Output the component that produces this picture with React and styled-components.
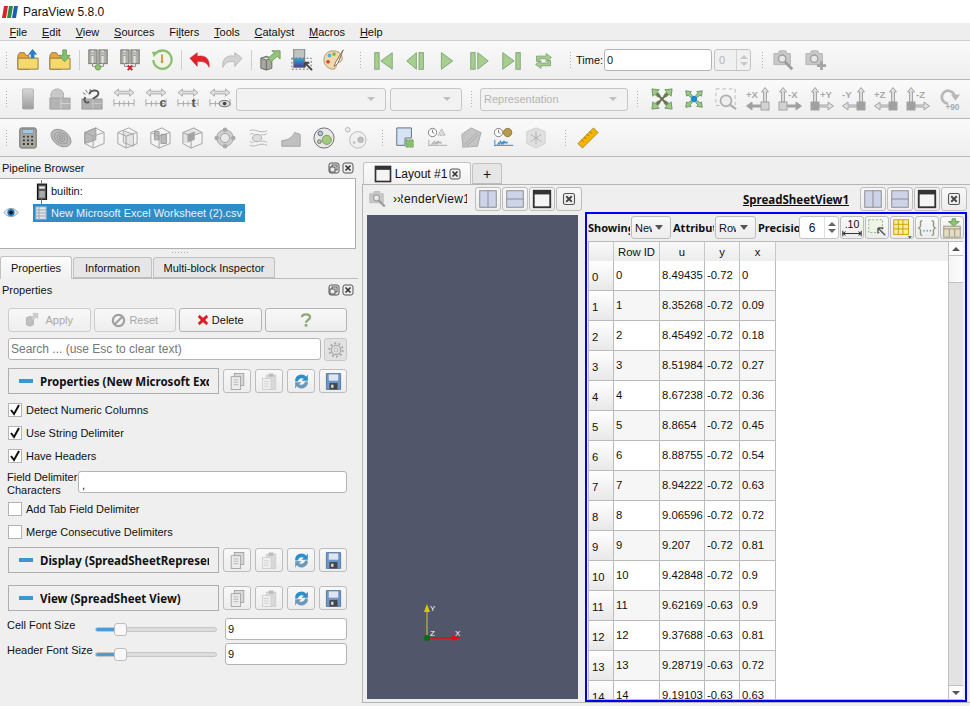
import React from "react";
import styled, { createGlobalStyle } from "styled-components";

const Global = createGlobalStyle`
  html, body { margin: 0; padding: 0; background: #efefef; }
  body { font-family: "Liberation Sans", Arial, sans-serif; font-size: 11px; color: #111; }
  * { box-sizing: border-box; }
`;

const Page = styled.div`
  width: 970px;
  height: 706px;
  overflow: hidden;
  display: flex;
  flex-direction: column;
  background: #efefef;
`;

const TitleBar = styled.div`
  height: 23px;
  background: #fff;
  display: flex;
  align-items: center;
  padding-left: 2px;
  gap: 5px;
  font-size: 12px;
`;

const MenuBar = styled.div`
  height: 18px;
  display: flex;
  align-items: center;
  padding-left: 2px;
  background: #eee;
  border-bottom: 1px solid #cfcfcf;
`;

const MenuItem = styled.span`
  padding: 0 7.4px;
  u { text-underline-offset: 1px; }
`;

const ToolRow = styled.div`
  height: ${p => p.$h || 39}px;
  display: flex;
  align-items: center;
  background: linear-gradient(#fafafa, #eeeeee);
  border-bottom: 1px solid #b8b8b8;
`;

const HandleBox = styled.div`
  width: ${p => p.$w || 12}px;
  flex: none;
  display: flex;
  justify-content: center;
  padding-left: ${p => p.$pad || 0}px;
  &::before {
    content: "";
    width: 3px;
    height: 18px;
    background-image: radial-gradient(#b0b0b0 0.7px, transparent 0.9px);
    background-size: 3px 3px;
  }
`;

const Sep = styled.div`
  width: 6px;
  flex: none;
  display: flex;
  justify-content: center;
  &::before { content: ""; width: 1px; height: 20px; background: #cfcfcf; }
`;

const ToolCell = styled.div`
  width: ${p => p.$w || 32}px;
  flex: none;
  display: flex;
  align-items: center;
  justify-content: center;
`;

const Glyph = styled.svg`
  width: ${p => p.$s || 24}px;
  height: ${p => p.$s || 24}px;
  flex: none;
  display: block;
`;

const Combo = styled.div`
  width: ${p => p.$w}px;
  height: 23px;
  flex: none;
  margin-left: ${p => p.$ml || 0}px;
  display: flex;
  align-items: center;
  padding: 0 3px;
  border: 1px solid #c6c6c6;
  border-radius: 3px;
  background: #f2f2f2;
  color: #b4b4b4;
  overflow: hidden;
  white-space: nowrap;
  &::after {
    content: "";
    margin-left: auto;
    margin-right: 7px;
    border: 4px solid transparent;
    border-top: 4px solid #c0c0c0;
    border-bottom: 0;
  }
`;

const TimeLabel = styled.span`
  width: 28px;
  flex: none;
`;

const TextBox = styled.div`
  width: ${p => (p.$w ? p.$w + "px" : "auto")};
  flex: ${p => (p.$w ? "none" : 1)};
  height: ${p => p.$h || 22}px;
  background: #fff;
  border: 1px solid #b4b4b4;
  border-radius: 3px;
  padding: 0 2px;
  display: flex;
  align-items: center;
  font-size: ${p => (p.$muted ? 12 : 11)}px;
  color: ${p => (p.$muted ? "#777" : "#111")};
  white-space: nowrap;
  overflow: hidden;
`;

const Spin = styled.div`
  width: ${p => p.$w}px;
  height: 22px;
  flex: none;
  margin-left: 2px;
  border: 1px solid #c4c4c4;
  border-radius: 3px;
  background: ${p => (p.$on ? "#fff" : "#f0f0f0")};
  color: ${p => (p.$on ? "#111" : "#b4b4b4")};
  display: flex;
  align-items: center;
  justify-content: space-between;
  padding-left: ${p => (p.$on ? 0 : 4)}px;
`;

const SpinValue = styled.span`
  flex: 1;
  text-align: ${p => (p.$center ? "center" : "left")};
`;

const SpinArrows = styled.div`
  width: 14px;
  height: 100%;
  flex: none;
  border-left: 1px solid ${p => (p.$on ? "#e0e0e0" : "#d0d0d0")};
  display: flex;
  flex-direction: column;
  align-items: center;
  justify-content: center;
  gap: 3px;
  &::before, &::after { content: ""; border: 4px solid transparent; }
  &::before { border-bottom: 4px solid ${p => (p.$on ? "#666" : "#c8c8c8")}; border-top: 0; }
  &::after { border-top: 4px solid ${p => (p.$on ? "#666" : "#c8c8c8")}; border-bottom: 0; }
`;

const Main = styled.div`
  flex: 1;
  display: flex;
  min-height: 0;
`;

const LeftColumn = styled.div`
  width: 358px;
  flex: none;
  display: flex;
  flex-direction: column;
`;

const DockTitle = styled.div`
  height: 16px;
  margin-top: ${p => p.$mt || 0}px;
  display: flex;
  align-items: center;
  justify-content: space-between;
  padding: 0 4px 0 2px;
  white-space: nowrap;
`;

const DockButtons = styled.div`
  display: flex;
  gap: 2px;
`;

const TreeBox = styled.div`
  height: 71px;
  margin: 2px 2px 0 -1px;
  padding-top: 1px;
  background: #fff;
  border: 1px solid #adadad;
`;

const TreeRow = styled.div`
  position: relative;
  height: ${p => p.$h}px;
  margin-top: ${p => p.$mt || 0}px;
  display: flex;
  align-items: center;
`;

const TreeItem = styled.div`
  margin-left: 33px;
  width: ${p => (p.$selected ? "212px" : "auto")};
  height: 100%;
  display: flex;
  align-items: center;
  gap: ${p => (p.$selected ? 4 : 2)}px;
  padding-left: 2px;
  white-space: nowrap;
  background: ${p => (p.$selected ? "#308cc6" : "transparent")};
  color: ${p => (p.$selected ? "#e9f3fa" : "#111")};
`;

const EyeSlot = styled.div`
  position: absolute;
  left: 3px;
  top: 2px;
`;

const Stub = styled.div`
  position: absolute;
  left: 41px;
  top: ${p => p.$top}px;
  width: 1px;
  height: ${p => p.$h}px;
  background: #777;
`;

const Splitter = styled.div`
  height: 7px;
  display: flex;
  justify-content: center;
  align-items: center;
  &::before {
    content: "";
    width: 17px;
    height: 1px;
    background-image: radial-gradient(#aaa 0.6px, transparent 0.8px);
    background-size: 3px 1px;
  }
`;

const TabStrip = styled.div`
  height: 23px;
  display: flex;
  align-items: flex-end;
  border-bottom: 1px solid #bdbdbd;
  padding-left: ${p => p.$pad || 0}px;
`;

const Tab = styled.div`
  width: ${p => p.$w}px;
  height: ${p => (p.$active ? 23 : 21)}px;
  margin-bottom: ${p => (p.$active ? -1 : 0)}px;
  margin-right: 1px;
  display: flex;
  align-items: center;
  justify-content: center;
  gap: 2px;
  font-size: ${p => p.$fs || 11}px;
  background: ${p => (p.$active ? "linear-gradient(#fcfcfc, #f0f0f0)" : "#e6e6e6")};
  border: 1px solid #c2c2c2;
  border-bottom: ${p => (p.$active ? "none" : "1px solid #bdbdbd")};
  border-radius: 3px 3px 0 0;
  white-space: nowrap;
`;

const PropsBody = styled.div`
  padding: 0 11px 0 8px;
  display: flex;
  flex-direction: column;
`;

const ButtonRow = styled.div`
  display: flex;
  gap: 3px;
  margin-top: ${p => p.$mt || 0}px;
`;

const ActionButton = styled.div`
  flex: 1;
  height: 24px;
  display: flex;
  align-items: center;
  justify-content: center;
  gap: 3px;
  border: 1px solid ${p => (p.$off ? "#cdcdcd" : "#b4b4b4")};
  border-radius: 3px;
  background: linear-gradient(#f8f8f8, #eeeeee);
  color: ${p => (p.$off ? "#a8a8a8" : "#111")};
`;

const GearButton = styled.div`
  width: 23px;
  height: 23px;
  flex: none;
  display: flex;
  align-items: center;
  justify-content: center;
  border: 1px solid #c8c8c8;
  border-radius: 3px;
  background: #e2e2e2;
`;

const SectionRow = styled.div`
  display: flex;
  margin-top: ${p => p.$mt || 0}px;
  height: 26px;
`;

const SectionTitle = styled.div`
  width: 211px;
  flex: none;
  border: 1px solid #aeaeae;
  display: flex;
  align-items: center;
  padding: 0 9px 0 10px;
  &::before {
    content: "";
    width: 14px;
    height: 4px;
    flex: none;
    margin-right: 7px;
    background: #3d97cf;
  }
`;

const BoldClip = styled.span`
  flex: 1;
  min-width: 0;
  font-family: "Noto Sans", sans-serif;
  font-size: 11.5px;
  font-weight: 700;
  white-space: nowrap;
  overflow: hidden;
`;

const SectionTools = styled.div`
  display: flex;
  gap: 4px;
  margin-left: 4px;
  align-items: center;
`;

const SquareButton = styled.div`
  width: ${p => p.$w || 28}px;
  height: ${p => p.$h || 24}px;
  flex: none;
  display: flex;
  align-items: center;
  justify-content: center;
  border: 1px solid #bdbdbd;
  border-radius: 3px;
  background: linear-gradient(#f8f8f8, #ededed);
`;

const CheckRow = styled.div`
  height: 23px;
  display: flex;
  align-items: center;
  gap: 4px;
  margin-top: ${p => p.$mt || 0}px;
`;

const CheckBox = styled.div`
  width: 14px;
  height: 14px;
  flex: none;
  background: #fff;
  border: 1px solid #b4b4b4;
  display: flex;
  align-items: center;
  justify-content: center;
`;

const FieldRow = styled.div`
  display: flex;
  margin-top: ${p => p.$mt || 0}px;
  height: ${p => p.$h || 25}px;
`;

const FieldLabel = styled.div`
  width: 70px;
  flex: none;
  margin-left: -1px;
  margin-right: 1px;
  line-height: 13px;
  white-space: nowrap;
`;

const Comma = styled.span`
  padding: 5px 0 0 1px;
`;

const SliderRow = styled.div`
  display: flex;
  align-items: center;
  height: 22px;
  margin-top: ${p => p.$mt || 0}px;
`;

const SliderLabel = styled.span`
  width: 87px;
  flex: none;
  margin-left: -1px;
  margin-top: -8px;
  white-space: nowrap;
`;

const SliderTrack = styled.div`
  position: relative;
  width: 122px;
  height: 5px;
  flex: none;
  margin: 0 8px 0 1px;
  background: #dcdcdc;
  border: 1px solid #c6c6c6;
  border-radius: 3px;
`;

const SliderFill = styled.div`
  height: 100%;
  background: #4a9cd6;
  border-radius: 3px 0 0 3px;
`;

const SliderKnob = styled.div`
  position: absolute;
  left: 18px;
  top: -5px;
  width: 13px;
  height: 13px;
  background: #f8f8f8;
  border: 1px solid #bdbdbd;
  border-radius: 3px;
`;

const RightColumn = styled.div`
  width: 608px;
  margin-left: 4px;
  flex: none;
  display: flex;
  flex-direction: column;
`;

const LayoutTabs = styled(TabStrip)`
  height: 27px;
  border-bottom: none;
  padding-left: 1px;
`;

const Pane = styled.div`
  height: 519px;
  display: flex;
  border: 1px solid #b5b5b5;
  border-right: none;
`;

const RenderSide = styled.div`
  width: 222px;
  flex: none;
  display: flex;
  flex-direction: column;
`;

const ViewHeader = styled.div`
  height: ${p => p.$h}px;
  display: flex;
  padding: 2px 3px 0 6px;
  gap: 1px;
  justify-content: ${p => (p.$end ? "flex-end" : "flex-start")};
`;

const ViewName = styled.div`
  flex: 1;
  min-width: 0;
  height: 24px;
  display: flex;
  align-items: center;
  font-size: 12px;
`;

const ActiveViewName = styled.div`
  height: 24px;
  display: flex;
  align-items: center;
  margin-right: 10px;
  font-family: "Noto Sans", sans-serif;
  font-size: 11.5px;
  font-weight: 700;
  text-decoration: underline;
`;

const Clipped = styled.span`
  width: 66px;
  overflow: hidden;
  white-space: nowrap;
  display: block;
  span { display: inline-block; margin-left: -6px; letter-spacing: 0.3px; }
`;

const Chevrons = styled.span`
  margin: 0 0 0 6px;
`;

const RenderArea = styled.div`
  position: relative;
  width: 211px;
  height: 484px;
  margin-left: 4px;
  background: #52566b;
`;

const AxesSlot = styled.div`
  position: absolute;
  left: 50px;
  top: 385px;
`;

const SheetSide = styled.div`
  flex: 1;
  min-width: 0;
  display: flex;
  flex-direction: column;
`;

const BlueFrame = styled.div`
  width: 382px;
  height: 490px;
  border: 2px solid #0000f0;
  display: flex;
  flex-direction: column;
`;

const SheetBar = styled.div`
  height: 27px;
  flex: none;
  display: flex;
  align-items: center;
  padding-left: 1px;
`;

const BarLabel = styled.div`
  width: ${p => p.$w}px;
  flex: none;
  font-family: "Noto Sans", sans-serif;
  font-size: 11px;
  font-weight: 700;
  overflow: hidden;
  white-space: nowrap;
`;

const BarCombo = styled.div`
  width: ${p => p.$w}px;
  height: 23px;
  flex: none;
  margin: 0 2px 0 1px;
  display: flex;
  align-items: center;
  padding: 0 3px;
  border: 1px solid #bdbdbd;
  border-radius: 3px;
  background: linear-gradient(#f8f8f8, #ededed);
  overflow: hidden;
`;

const ComboText = styled.span`
  width: 17px;
  overflow: hidden;
  white-space: nowrap;
  flex: none;
`;

const ComboArrow = styled.span`
  margin-left: auto;
  margin-right: 4px;
  border: 4px solid transparent;
  border-top: 5px solid #555;
  border-bottom: 0;
`;

const SheetSpin = styled(Spin)`
  height: 23px;
  margin: 0 1px 0 0;
  width: 40px;
  font-size: 12px;
`;

const BarButtons = styled.div`
  display: flex;
  gap: 1px;
`;

const SheetBody = styled.div`
  flex: 1;
  min-height: 0;
  display: flex;
  border-top: 1px solid #bbb;
  margin-left: 1px;
  margin-right: 2px;
  border-left: 1px solid #bbb;
  border-bottom: 1px solid #bbb;
  font-size: 11.3px;
`;

const TableArea = styled.div`
  flex: 1;
  overflow: hidden;
  background: linear-gradient(#f0f0f0 0 19px, #fff 19px);
`;

const Table = styled.table`
  table-layout: fixed;
  border-collapse: separate;
  border-spacing: 0;
  width: 187px;
`;

const HeadCell = styled.th`
  height: 19px;
  padding: 0;
  width: ${p => p.$w}px;
  font-weight: 400;
  text-align: center;
  background: linear-gradient(#f8f8f8, #ececec);
  border-right: 1px solid #c8c8c8;
`;

const RowHead = styled.th`
  height: 30px;
  padding: 2px 0 0 3px;
  font-weight: 400;
  text-align: left;
  background: linear-gradient(#ffffff, #e8e8e8);
  border-right: 1px solid #bbb;
  border-bottom: 1px solid #bbb;
`;

const Cell = styled.td`
  height: 30px;
  padding: 0 0 2px 2px;
  white-space: nowrap;
  overflow: hidden;
  background: ${p => (p.$odd ? "#f6f6f6" : "#fff")};
  border-right: 1px solid #bbb;
  border-bottom: 1px solid #bbb;
`;

const ScrollBar = styled.div`
  width: 15px;
  flex: none;
  display: flex;
  flex-direction: column;
  background: #e3e3e3;
  border-left: 1px solid #c0c0c0;
`;

const ScrollStep = styled.div`
  height: 14px;
  flex: none;
  background: #fbfbfb;
  display: flex;
  align-items: center;
  justify-content: center;
  border-${p => (p.$down ? "top" : "bottom")}: 1px solid #c0c0c0;
  &::before {
    content: "";
    border: 4px solid transparent;
    ${p => (p.$down ? "border-top: 4px solid #555; border-bottom: 0;" : "border-bottom: 4px solid #555; border-top: 0;")}
  }
`;

const ScrollThumb = styled.div`
  height: 27px;
  flex: none;
  background: linear-gradient(90deg, #f4f4f4, #fdfdfd);
  border-bottom: 1px solid #c0c0c0;
`;

const ScrollTrack = styled.div`
  flex: 1;
`;

// ---- icon drawings ----

const off = { fill: "#b9b9b9", stroke: "#9a9a9a" };
const vcr = { fill: "#a4cf8e", stroke: "#7f9f74", strokeWidth: 1 };

const Wire = ({ children }) => (
  <>
    {children}
    <path d="M2 6L14 1 23 6V18L11 23 2 18ZM2 6L11 10 23 6M11 10V23" fill="none" stroke="#a0a0a0" />
  </>
);

const Server = ({ children }) => (
  <>
    <rect x="2" y="1" width="9" height="15" fill="#b0b0a8" stroke="#6c6c6c" />
    <rect x="13" y="1" width="9" height="15" fill="#b0b0a8" stroke="#6c6c6c" />
    <path d="M6 1.500V15.500M17 1.500V15.500" stroke="#e8e8e4" strokeWidth="2" />
    <path d="M5 4.500h2M5 7h2M16 4.500h2M16 7h2" stroke="#777" />
    <path d="M6 16v3h12v-3" fill="none" stroke="#888" />
    {children}
  </>
);

const Ticks = ({ letter }) => (
  <>
    <path d="M1 5L6 1V3.500H18V1L23 5 18 9V6.500H6V9Z" fill="#dcdcdc" stroke="#adadad" />
    <path d="M1 12V20M1 17H23M23 12V20M7 14V20M12 14V20M17 14V20" fill="none" stroke="#a8a8a8" />
    {letter && <text x="16" y="21" fontSize="13" fontWeight="700" fill="#555" fontFamily="Liberation Sans">{letter}</text>}
  </>
);

const Axis = ({ label, flip, dark }) => (
  <>
    <g transform={flip ? "translate(24,0) scale(-1,1)" : undefined}>
      <path d="M1.500 5L5 0.500 8.500 5H6.500V15H3.500V5Z" fill="#dedede" stroke="#a4a4a4" />
      <path d="M9 18H18V15L23.500 19 18 23V20H9Z" fill={dark ? "#dedede" : "#a0a0a0"} stroke="#a4a4a4" />
      <rect x="1" y="15" width="8" height="8" fill={dark ? "#a0a0a0" : "#d2d2d2"} stroke="#a4a4a4" />
    </g>
    <text x={flip ? 0 : 10} y="11" fontSize="9.500" fontWeight="700" fill="#a8a8a8" fontFamily="Liberation Sans">{label}</text>
  </>
);

const Camera = ({ children }) => (
  <>
    <path d="M1 5H6L7 2H14L15 5H19V17H1Z" fill="#c8c8c8" stroke="#b4b4b4" />
    <circle cx="10" cy="10.500" r="4" fill="#e8e8e8" stroke="#a0a0a0" strokeWidth="1.500" />
    {children}
  </>
);

const TinyClock = ({ wave, ball }) => (
  <>
    <circle cx="6" cy="6" r="4.500" fill="#fff" stroke="#777" />
    <path d="M6 3v3l2 1" fill="none" stroke="#777" />
    {ball ? <circle cx="16" cy="6" r="4.500" fill="#b89a50" stroke="#8a7430" /> : <path d="M16 2l4 7h-8z" fill="#ddd" stroke="#aaa" strokeDasharray="2 1" />}
    <path d="M2 14v7M2 20H22M5 20l1-3 1 2 1-4 1 4 1-3 1 3 1-4 1 3 1-2 1 2 1-2" fill="none" stroke={wave} />
  </>
);

const icons = {
  open: (
    <>
      <path d="M1 22V7L3 4H8L10 7H13V22Z" fill="#e8a63c" stroke="#8c7440" />
      <path d="M1 22V10H23V22Z" fill="#f6d96d" stroke="#8c7440" />
      <path d="M17 0L22 6H19V10H15V6H12Z" fill="#2a7fc4" />
    </>
  ),
  save: (
    <>
      <path d="M1 22V7L3 4H8L10 7H13V22Z" fill="#e8a63c" stroke="#8c7440" />
      <path d="M1 22V10H23V22Z" fill="#f6d96d" stroke="#8c7440" />
      <path d="M15 1H19V7H23L17 14 11 7H15Z" fill="#86bd6f" stroke="#6d9c58" />
    </>
  ),
  connect: <Server><circle cx="12" cy="20" r="3" fill="#8cc46e" stroke="#6f9a58" /></Server>,
  disconnect: <Server><path d="M9.500 18l5 5M14.500 18l-5 5" stroke="#c8232c" strokeWidth="2" /></Server>,
  recent: (
    <>
      <path d="M5 5A10 10 0 1 1 2.500 12" fill="#f3f3e8" stroke="#8cc071" strokeWidth="2.500" />
      <path d="M1 3L8 3 3 9Z" fill="#8cc071" />
      <path d="M12 6V13" stroke="#c89a3a" strokeWidth="2" />
      <circle cx="12" cy="14" r="1.500" fill="#c89a3a" />
    </>
  ),
  undo: <path d="M1 10L9 4V8C17 6 23 10 22 20 19 14 15 13 9 14V19Z" fill="#e0222a" stroke="#b81c22" strokeWidth="0.500" />,
  redo: <path d="M23 10L15 4V8C7 6 1 10 2 20 5 14 9 13 15 14V19Z" fill="#d2d2d2" stroke="#b8b8b8" />,
  extract: (
    <>
      <path d="M2 10L8 8 14 10V21L8 23 2 21ZM2 10L8 12 14 10M8 12V23" fill="#a8a8a0" stroke="#666" />
      <path d="M10 10L17 4 14 2H23V11L20 8 13 14Z" fill="#94c57c" stroke="#6f9a58" />
    </>
  ),
  colormap: (
    <>
      <defs>
        <linearGradient id="cm" x1="0" y1="0" x2="0" y2="1">
          <stop offset="0" stopColor="#bfbfbf" />
          <stop offset="0.45" stopColor="#bfc4c4" />
          <stop offset="0.55" stopColor="#2f9fd0" />
          <stop offset="1" stopColor="#4a3c9a" />
        </linearGradient>
      </defs>
      <rect x="3" y="0" width="12" height="20" fill="url(#cm)" stroke="#777" />
      <rect x="1" y="10" width="21" height="12" fill="none" stroke="#666" strokeDasharray="2 2" />
      <path d="M15 15L23 23M15 15v5M15 15h5" fill="none" stroke="#444" strokeWidth="2" />
    </>
  ),
  palette: (
    <>
      <path d="M11 2C4 2 1 7 1 12 1 18 6 22 11 22 15 22 14 18 15 16 17 14 21 15 21 10 21 5 16 2 11 2Z" fill="#f0d9ac" stroke="#a89468" />
      <circle cx="7" cy="7" r="2" fill="#4fb0e0" />
      <circle cx="12" cy="5.500" r="2" fill="#7fb850" />
      <circle cx="5.500" cy="14" r="2" fill="#d8403c" />
      <path d="M22 1L14 14 12 19 16 16Z" fill="#fff" stroke="#7a6a4a" />
    </>
  ),
  first: <><rect x="2" y="3" width="5" height="19" {...vcr} /><path d="M22 3L9 12.500 22 22Z" {...vcr} /></>,
  prev: <><path d="M13 3L2 12.500 13 22Z" {...vcr} /><rect x="16" y="3" width="5" height="19" {...vcr} /></>,
  play: <path d="M5 3L18 12.500 5 22Z" {...vcr} />,
  next: <><rect x="2" y="3" width="5" height="19" {...vcr} /><path d="M10 3L22 12.500 10 22Z" {...vcr} /></>,
  last: <><path d="M2 3L15 12.500 2 22Z" {...vcr} /><rect x="17" y="3" width="5" height="19" {...vcr} /></>,
  loop: (
    <>
      <path d="M4 13V7H15V4L21 8.500 15 13V10H7V13Z" {...vcr} />
      <path d="M20 12V18H9V21L3 16.500 9 12V15H17V12Z" {...vcr} />
    </>
  ),
  capture: <Camera><path d="M13 14L21 22" stroke="#9c9c9c" strokeWidth="3" /></Camera>,
  addCapture: <Camera><path d="M18 13V23M13 18H23" stroke="#a4a4a4" strokeWidth="3" /></Camera>,
  block: (
    <>
      <defs>
        <linearGradient id="bl" x1="0" y1="0" x2="0" y2="1">
          <stop offset="0" stopColor="#d8d8d8" />
          <stop offset="1" stopColor="#9a9a9a" />
        </linearGradient>
      </defs>
      <rect x="6" y="1" width="12" height="22" rx="1" fill="url(#bl)" stroke="#b0b0b0" />
    </>
  ),
  sphereGrid: (
    <>
      <circle cx="9" cy="8" r="7" fill="#c8c8c8" stroke="#aaa" />
      <rect x="1" y="11" width="22" height="12" fill="#b4b4b4" stroke="#a0a0a0" />
      <path d="M13 11V23M13 17H23" stroke="#d8d8d8" />
    </>
  ),
  link: (
    <>
      <rect x="1" y="12" width="22" height="11" fill="#b0b0b0" stroke="#999" />
      <path d="M13 12V23M13 17H23" stroke="#ccc" />
      <path d="M9 7C10 2 19 1 19 6 19 10 14 10 13 12M9 15C5 18 2 13 5 10" fill="none" stroke="#555" strokeWidth="2" />
      <path d="M5 2L7 5M2 5L5 7M10 1L10 4" stroke="#666" />
    </>
  ),
  ticks: <Ticks />,
  ticksC: <Ticks letter="c" />,
  ticksT: <Ticks letter="t" />,
  ticksEye: (
    <>
      <Ticks />
      <ellipse cx="17" cy="17" rx="6" ry="3.500" fill="#dcdcdc" stroke="#666" />
      <circle cx="17" cy="17" r="2" fill="#444" />
    </>
  ),
  reset: (
    <>
      <path d="M1 1L9 2 7 4 10 8 8 10 4 7 2 9ZM23 1L22 9 20 7 16 10 14 8 17 4 15 2ZM1 23L2 15 4 17 8 14 10 16 7 20 9 22ZM23 23L15 22 17 20 14 16 16 14 20 17 22 15Z" fill="#9acb84" stroke="#6f8f64" />
      <path d="M6 6L18 18M18 6L6 18" stroke="#6b6b50" strokeWidth="2" />
    </>
  ),
  center: (
    <>
      <path d="M3 3L9 4 7.500 5.500 10 8 8 10 5.500 7.500 4 9ZM21 3L20 9 18.500 7.500 16 10 14 8 16.500 5.500 15 4ZM3 21L4 15 5.500 16.500 8 14 10 16 7.500 18.500 9 20ZM21 21L15 20 16.500 18.500 14 16 16 14 18.500 16.500 20 15Z" fill="#9acb84" stroke="#6f8f64" />
      <circle cx="12" cy="12" r="3.500" fill="#1f8ac8" />
    </>
  ),
  zoomBox: (
    <>
      <rect x="1" y="1" width="21" height="18" fill="none" stroke="#b8b8b8" strokeDasharray="4 3" />
      <circle cx="12" cy="14" r="6" fill="#eee" stroke="#b0b0b0" strokeWidth="2" />
      <path d="M16 18L23 23" stroke="#b0b0b0" strokeWidth="2.500" />
    </>
  ),
  rot90: (
    <>
      <path d="M17 11A7 7 0 1 0 10 17" fill="none" stroke="#b8b8b8" strokeWidth="3" />
      <path d="M13 7L23 7 18 14Z" fill="#b8b8b8" />
      <text x="7" y="24" fontSize="9" fontWeight="700" fill="#aaa" fontFamily="Liberation Sans">+90</text>
    </>
  ),
  calc: (
    <>
      <rect x="3" y="1" width="18" height="22" rx="2" fill="#a8a8a0" stroke="#666" />
      <rect x="6" y="3" width="12" height="4" fill="#9cc8e8" stroke="#778" strokeWidth="0.500" />
      <path d="M6.500 10.500h2M11 10.500h2M15.500 10.500h2M6.500 14.500h2M11 14.500h2M15.500 14.500h2M6.500 18.500h2M11 18.500h2M15.500 18.500h2" stroke="#333" strokeWidth="2" />
    </>
  ),
  contour: (
    <g transform="rotate(35 12 12)" fill="none" stroke="#999">
      <ellipse cx="12" cy="12" rx="12" ry="8" fill="#bbb" />
      <ellipse cx="12" cy="12" rx="8" ry="5.500" />
      <ellipse cx="12" cy="12" rx="4.500" ry="3" />
      <ellipse cx="12" cy="12" rx="2" ry="1.200" />
    </g>
  ),
  clip: <Wire><path d="M2 6L14 1V14L2 18Z" {...off} /></Wire>,
  slice: <Wire><path d="M8 4L19 8V21L8 17Z" fill="#e4e4e4" stroke="#aaa" /></Wire>,
  extractBox: <Wire><path d="M6 5H11V14H6ZM13 8H19V18H13Z" {...off} /></Wire>,
  threshold: <Wire><path d="M2 6L14 1 23 6 11 10 11 16 2 18Z" fill="#e2e2e2" /><path d="M7 8L15 5V14L7 17Z" fill="#a4a4a4" /></Wire>,
  glyph: (
    <>
      <circle cx="12" cy="12" r="9" fill="#d0d0d0" stroke="#a0a0a0" />
      <circle cx="12" cy="12" r="5" fill="#e8e8e8" stroke="#a0a0a0" />
      <g fill="#aaa"><circle cx="12" cy="3" r="2.500" /><circle cx="12" cy="21" r="2.500" /><circle cx="3" cy="12" r="2.500" /><circle cx="21" cy="12" r="2.500" /></g>
    </>
  ),
  stream: (
    <>
      <ellipse cx="11" cy="12" rx="5" ry="4" fill="#ddd" stroke="#aaa" />
      <path d="M3 4C9 1 14 8 22 4M3 8C6 7 7 7 8 8M15 8C17 9 20 9 22 7M3 16C6 17 7 17 8 16M15 16C17 15 20 15 22 17M3 20C9 23 14 16 22 20" fill="none" stroke="#b0b0b0" />
    </>
  ),
  warp: <path d="M2 21V15C9 14 13 12 16 6L22 8V21Z" fill="#c0c0c0" stroke="#a0a0a0" />,
  group: (
    <>
      <circle cx="12" cy="12" r="11" fill="#e8e8e8" stroke="#666" />
      <circle cx="15" cy="14" r="5" fill="#a4c87e" stroke="#789a58" />
      <circle cx="8" cy="7" r="2.500" fill="#a8cbe8" stroke="#666" />
      <circle cx="7" cy="16" r="2" fill="#b4d4a0" stroke="#666" />
    </>
  ),
  level: (
    <>
      <circle cx="14" cy="14" r="9" fill="#f0f0f0" stroke="#b8b8b8" />
      <circle cx="3" cy="3" r="2.500" fill="#eee" stroke="#b0b0b0" />
      <circle cx="17" cy="14" r="3" fill="#c0c0c0" stroke="#aaa" />
      <circle cx="10" cy="17" r="1.500" fill="#c0c0c0" />
    </>
  ),
  select: (
    <>
      <path d="M3 1H19V12H12V20H3Z" fill="#d4e4f4" stroke="#5a6a7a" />
      <rect x="13" y="14" width="8" height="8" fill="#88c070" stroke="#6f9a58" strokeDasharray="2 1" />
    </>
  ),
  timeWaveOff: <TinyClock wave="#aaa" />,
  brush: (
    <>
      <path d="M12 1L23 6 19 21 3 22 2 8Z" fill="#c4c4c4" stroke="#aaa" />
      <path d="M5 19L19 6M8 20L20 9" stroke="#999" strokeDasharray="2 1" />
    </>
  ),
  timeWave: <TinyClock wave="#2a7fc4" ball />,
  crystal: (
    <>
      <path d="M12 1L22 5V18L12 23 2 18V5Z" fill="#e0e0e0" stroke="#cfcfcf" />
      <path d="M12 5V19M6 8L18 16M18 8L6 16" stroke="#b0b0b0" />
    </>
  ),
  ruler: (
    <>
      <path d="M1 18L18 1 23 6 6 23Z" fill="#f4b400" stroke="#a88a20" />
      <path d="M5 14l2 2M8 11l2 2M11 8l2 2M14 5l2 2" stroke="#8a6a10" />
    </>
  ),
  copy: (
    <>
      <rect x="8" y="2" width="12" height="15" fill="#d8d8d8" stroke="#999" />
      <rect x="4" y="6" width="12" height="16" fill="#ececec" stroke="#999" />
      <path d="M7 10h6M7 13h6M7 16h6" stroke="#aaa" />
    </>
  ),
  paste: (
    <>
      <rect x="8" y="4" width="12" height="18" fill="#d8d8d8" stroke="#ccc" />
      <rect x="11" y="2" width="6" height="4" fill="#bbb" />
      <rect x="3" y="8" width="11" height="14" fill="#eee" stroke="#ccc" />
      <path d="M5 12h6M5 15h6M5 18h6" stroke="#ccc" />
    </>
  ),
  refresh: (
    <>
      <path d="M4 12A8 8 0 0 1 18 6L20 3V11H12L15 8.500A5 5 0 0 0 7.500 12Z" fill="#2f8dc8" />
      <path d="M20 12A8 8 0 0 1 6 18L4 21V13H12L9 15.500A5 5 0 0 0 16.500 12Z" fill="#6a9ab8" />
    </>
  ),
  disk: (
    <>
      <path d="M3 2H21V22H3Z" fill="#6a96c8" stroke="#4a6a90" />
      <rect x="6" y="3" width="12" height="8" fill="#dde6f0" />
      <rect x="7" y="14" width="10" height="8" fill="#444" />
      <rect x="9" y="16" width="3" height="4" fill="#ddd" />
    </>
  ),
  gear: (
    <>
      <circle cx="12" cy="12" r="7" fill="none" stroke="#aaa" strokeWidth="2" />
      <circle cx="12" cy="12" r="10" fill="none" stroke="#aaa" strokeWidth="3" strokeDasharray="3 3.300" />
      <circle cx="12" cy="12" r="3" fill="none" stroke="#aaa" />
    </>
  ),
  splitH: <><rect x="3" y="3" width="18" height="18" fill="#cdd4ea" stroke="#888" /><path d="M12 3V21" stroke="#888" /></>,
  splitV: <><rect x="3" y="3" width="18" height="18" fill="#cdd4ea" stroke="#888" /><path d="M3 12H21" stroke="#888" /></>,
  maximize: <><rect x="3" y="3" width="18" height="18" fill="#f4f4f4" stroke="#333" strokeWidth="2" /><rect x="3" y="3" width="18" height="4" fill="#333" /></>,
  closeBox: (
    <>
      <rect x="6" y="6" width="12" height="12" rx="2" fill="#eee" stroke="#555" strokeWidth="1.200" />
      <path d="M9 9L15 15M15 9L9 15" stroke="#444" strokeWidth="2" />
    </>
  ),
  float: (
    <>
      <rect x="1" y="1" width="10" height="10" rx="2" fill="none" stroke="#555" />
      <rect x="4" y="3" width="5" height="5" fill="none" stroke="#555" />
      <rect x="2" y="5" width="5" height="5" fill="#eee" stroke="#555" />
    </>
  ),
  dockClose: (
    <>
      <rect x="1" y="1" width="10" height="10" rx="2" fill="#eee" stroke="#555" />
      <path d="M3.500 3.500L8.500 8.500M8.500 3.500L3.500 8.500" stroke="#333" strokeWidth="1.600" />
    </>
  ),
  server: (
    <>
      <rect x="2" y="1" width="8" height="14" fill="#555" stroke="#111" />
      <rect x="3.500" y="3" width="5" height="2" fill="#eee" />
      <rect x="3.500" y="7" width="5" height="6" fill="#aaa" />
    </>
  ),
  sheet: (
    <>
      <rect x="1" y="1" width="10" height="12" fill="#dfe6ec" stroke="#b8c4cc" />
      <path d="M1 4H11M1 7H11M1 10H11M4 1V13" stroke="#9aa8b4" />
    </>
  ),
  eye: (
    <>
      <path d="M1 6.500C5 1 11 1 15 6.500 11 12 5 12 1 6.500Z" fill="#e4eef6" stroke="#8aa0b4" />
      <circle cx="8" cy="6.500" r="3.600" fill="#1f6fb0" />
      <circle cx="8" cy="6.500" r="1.800" fill="#111" />
    </>
  ),
  apply: (
    <>
      <path d="M2 8L7 6 12 8V18L7 20 2 18Z" fill="#c0c0c0" stroke="#aaa" />
      <path d="M8 9L13 4 11 2H18V9L16 7 11 12Z" fill="#cfcfcf" stroke="#b8b8b8" />
    </>
  ),
  resetBtn: (
    <>
      <circle cx="12" cy="12" r="9" fill="none" stroke="#a0a0a0" strokeWidth="3.500" />
      <path d="M6 18L18 6" stroke="#a0a0a0" strokeWidth="3.500" />
    </>
  ),
  deleteX: <path d="M5 2L12 8 19 2 22 6 16 12 22 18 19 22 12 16 5 22 2 18 8 12 2 6Z" fill="#e01b24" stroke="#a81820" strokeWidth="0.500" />,
  help: (
    <>
      <path d="M6 8C6 2 18 2 18 8 18 12 12 12 12 16" fill="none" stroke="#8fa878" strokeWidth="3.500" />
      <rect x="10" y="18" width="4" height="4" fill="#8fa878" />
    </>
  ),
  decimals: (
    <>
      <text x="4" y="12" fontSize="11.500" fill="#111" fontFamily="Liberation Sans">.10</text>
      <path d="M2 18H22M5 16L2 18 5 20M19 16L22 18 19 20M2 15V21M22 15V21" fill="none" stroke="#222" />
    </>
  ),
  selCells: (
    <>
      <rect x="3" y="3" width="15" height="14" fill="#eef4e8" stroke="#7fb060" strokeDasharray="2 2" />
      <path d="M13 12L21 20M13 12v6M13 12h6" fill="none" stroke="#555" strokeWidth="1.500" />
    </>
  ),
  grid: (
    <>
      <rect x="3" y="3" width="16" height="16" fill="#f8ec9c" stroke="#c8a000" />
      <path d="M3 8H19M3 13H19M8 3V19M13 3V19" stroke="#c8a000" />
      <path d="M18 21h5l-2.500 2.500z" fill="#555" />
    </>
  ),
  braces: (
    <>
      <path d="M7 4C4 4 5 6 5 9 5 11 3 12 3 12 3 12 5 13 5 15 5 18 4 20 7 20M17 4C20 4 19 6 19 9 19 11 21 12 21 12 21 12 19 13 19 15 19 18 20 20 17 20" fill="none" stroke="#8a9a78" strokeWidth="1.500" />
      <path d="M8 15h1.500M11.500 15h1.500M15 15h1.500" stroke="#4a9cd6" strokeWidth="1.500" />
    </>
  ),
  export: (
    <>
      <rect x="3" y="10" width="18" height="12" fill="#e4dcc0" stroke="#9a9480" />
      <path d="M3 13H21M9 13V22M15 13V22" stroke="#9a9480" />
      <path d="M12 2H16V5H20L14 10 8 5H12Z" fill="#8cc47c" stroke="#6f9a58" />
    </>
  ),
};

const Icon = ({ name, size }) => (
  <Glyph $s={size} viewBox="0 0 24 24">{icons[name]}</Glyph>
);

const SmallIcon = ({ name, w = 12, h = 12, vb = "0 0 12 12" }) => (
  <Glyph style={{ width: w, height: h }} viewBox={vb}>{icons[name]}</Glyph>
);

const Tools = ({ names, w, size = 22 }) =>
  names.map(n => (
    <ToolCell key={n} $w={w}>
      <Icon name={n} size={size} />
    </ToolCell>
  ));

const AxisTool = ({ label, flip, dark }) => (
  <ToolCell>
    <Glyph $s={24} viewBox="0 0 24 24"><Axis label={label} flip={flip} dark={dark} /></Glyph>
  </ToolCell>
);

const SectionHead = ({ title, mt }) => (
  <SectionRow $mt={mt}>
    <SectionTitle><BoldClip>{title}</BoldClip></SectionTitle>
    <SectionTools>
      {["copy", "paste", "refresh", "disk"].map(n => (
        <SquareButton key={n}>
          <Icon name={n} size={19} />
        </SquareButton>
      ))}
    </SectionTools>
  </SectionRow>
);

const Check = ({ checked, label, mt }) => (
  <CheckRow $mt={mt}>
    <CheckBox>
      {checked && (
        <Glyph $s={12} viewBox="0 0 12 12">
          <path d="M2 6L5 10 10 1" fill="none" stroke="#111" strokeWidth="2" />
        </Glyph>
      )}
    </CheckBox>
    {label}
  </CheckRow>
);

const FontSlider = ({ label, mt }) => (
  <SliderRow $mt={mt}>
    <SliderLabel>{label}</SliderLabel>
    <SliderTrack>
      <SliderFill style={{ width: "16%" }} />
      <SliderKnob />
    </SliderTrack>
    <TextBox>9</TextBox>
  </SliderRow>
);

const ViewButtons = () =>
  ["splitH", "splitV", "maximize", "closeBox"].map(n => (
    <SquareButton key={n} $w={26} $h={24}>
      <Icon name={n} size={22} />
    </SquareButton>
  ));

const rows = [
  ["8.49435", "-0.72", "0"],
  ["8.35268", "-0.72", "0.09"],
  ["8.45492", "-0.72", "0.18"],
  ["8.51984", "-0.72", "0.27"],
  ["8.67238", "-0.72", "0.36"],
  ["8.8654", "-0.72", "0.45"],
  ["8.88755", "-0.72", "0.54"],
  ["8.94222", "-0.72", "0.63"],
  ["9.06596", "-0.72", "0.72"],
  ["9.207", "-0.72", "0.81"],
  ["9.42848", "-0.72", "0.9"],
  ["9.62169", "-0.63", "0.9"],
  ["9.37688", "-0.63", "0.81"],
  ["9.28719", "-0.63", "0.72"],
  ["9.19103", "-0.63", "0.63"],
];

const menus = [
  ["", "F", "ile"],
  ["", "E", "dit"],
  ["", "V", "iew"],
  ["", "S", "ources"],
  ["Fi", "l", "ters"],
  ["", "T", "ools"],
  ["", "C", "atalyst"],
  ["", "M", "acros"],
  ["", "H", "elp"],
];

const App = () => (
  <Page>
    <Global />
    <TitleBar>
      <Glyph $s={16} viewBox="0 0 16 12" style={{ height: 12 }}>
        <path d="M0 12L2 0H6L4 12Z" fill="#d8232a" />
        <path d="M5 12L7 0H11L9 12Z" fill="#2f8a48" />
        <path d="M10 12L12 0H16L14 12Z" fill="#1f5fa8" />
      </Glyph>
      ParaView 5.8.0
    </TitleBar>
    <MenuBar>
      {menus.map(([a, b, c]) => (
        <MenuItem key={b + c}>{a}<u>{b}</u>{c}</MenuItem>
      ))}
    </MenuBar>

    <ToolRow>
      <HandleBox />
      <Tools names={["open", "save"]} />
      <Sep />
      <Tools names={["connect", "disconnect", "recent"]} />
      <Sep />
      <Tools names={["undo", "redo"]} />
      <Sep />
      <Tools names={["extract", "colormap", "palette"]} />
      <HandleBox $w={17} $pad={3} />
      <Tools names={["first", "prev", "play", "next", "last", "loop"]} size={21} />
      <HandleBox $w={17} $pad={5} />
      <TimeLabel>Time:</TimeLabel>
      <TextBox $w={108}>0</TextBox>
      <Spin $w={37}>
        <SpinValue>0</SpinValue>
        <SpinArrows />
      </Spin>
      <HandleBox $w={17} $pad={6} />
      <Tools names={["capture", "addCapture"]} />
    </ToolRow>

    <ToolRow>
      <HandleBox />
      <Tools names={["block", "sphereGrid", "link", "ticks", "ticksC", "ticksT", "ticksEye"]} />
      <Combo $w={150} />
      <Combo $w={72} $ml={4} />
      <HandleBox $w={18} />
      <Combo $w={148}>Representation</Combo>
      <HandleBox $w={18} />
      <Tools names={["reset", "center", "zoomBox"]} />
      <AxisTool label="+X" flip dark={false} />
      <AxisTool label="-X" />
      <AxisTool label="+Y" dark />
      <AxisTool label="-Y" flip dark />
      <AxisTool label="+Z" flip dark />
      <AxisTool label="-Z" dark />
      <Tools names={["rot90"]} />
    </ToolRow>

    <ToolRow $h={38}>
      <HandleBox />
      <Tools
        names={["calc", "contour", "clip", "slice", "extractBox", "threshold", "glyph", "stream", "warp", "group", "level"]}
        w={32.8}
      />
      <HandleBox $w={16} $pad={4} />
      <Tools names={["select", "timeWaveOff", "brush", "timeWave", "crystal"]} w={32.8} />
      <HandleBox $w={19} $pad={6} />
      <Tools names={["ruler"]} />
    </ToolRow>

    <Main>
      <LeftColumn>
        <DockTitle $mt={3}>
          Pipeline Browser
          <DockButtons>
            <SmallIcon name="float" />
            <SmallIcon name="dockClose" />
          </DockButtons>
        </DockTitle>
        <TreeBox>
          <TreeRow $h={22}>
            <Stub $top={0} $h={4} />
            <TreeItem>
              <SmallIcon name="server" w={14} h={17} vb="0 0 12 15" />
              <span>builtin:</span>
            </TreeItem>
            <Stub $top={19} $h={6} />
          </TreeRow>
          <TreeRow $h={18} $mt={2}>
            <EyeSlot>
              <SmallIcon name="eye" w={16} h={13} vb="0 0 16 13" />
            </EyeSlot>
            <TreeItem $selected>
              <SmallIcon name="sheet" w={12} h={14} vb="0 0 12 14" />
              <span>New Microsoft Excel Worksheet (2).csv</span>
            </TreeItem>
          </TreeRow>
        </TreeBox>
        <Splitter />
        <TabStrip>
          <Tab $active $w={72}>Properties</Tab>
          <Tab $w={79}>Information</Tab>
          <Tab $w={122}>Multi-block Inspector</Tab>
        </TabStrip>
        <DockTitle $mt={3}>
          Properties
          <DockButtons>
            <SmallIcon name="float" />
            <SmallIcon name="dockClose" />
          </DockButtons>
        </DockTitle>
        <PropsBody>
          <ButtonRow $mt={10}>
            <ActionButton $off><Icon name="apply" size={17} />Apply</ActionButton>
            <ActionButton $off><Icon name="resetBtn" size={15} />Reset</ActionButton>
            <ActionButton><Icon name="deleteX" size={12} />Delete</ActionButton>
            <ActionButton><Icon name="help" size={16} /></ActionButton>
          </ButtonRow>
          <ButtonRow $mt={6}>
            <TextBox $muted>Search ... (use Esc to clear text)</TextBox>
            <GearButton><Icon name="gear" size={16} /></GearButton>
          </ButtonRow>
          <SectionHead title="Properties (New Microsoft Excel Worksheet (2).csv)" mt={7} />
          <Check checked label="Detect Numeric Columns" mt={4} />
          <Check checked label="Use String Delimiter" />
          <Check checked label="Have Headers" />
          <FieldRow $mt={4}>
            <FieldLabel>Field Delimiter<br />Characters</FieldLabel>
            <TextBox><Comma>,</Comma></TextBox>
          </FieldRow>
          <Check label="Add Tab Field Delimiter" mt={1} />
          <Check label="Merge Consecutive Delimiters" />
          <SectionHead title="Display (SpreadSheetRepresentation)" mt={4} />
          <SectionHead title="View (SpreadSheet View)" mt={12} />
          <FontSlider label="Cell Font Size" mt={7} />
          <FontSlider label="Header Font Size" mt={3} />
        </PropsBody>
      </LeftColumn>

      <RightColumn>
        <LayoutTabs>
          <Tab $active $w={108} $fs={12}>
            <Icon name="maximize" size={20} />
            Layout #1
            <SmallIcon name="dockClose" />
          </Tab>
          <Tab $w={30} $fs={14}>+</Tab>
        </LayoutTabs>
        <Pane>
          <RenderSide>
            <ViewHeader $h={30}>
              <ViewName>
                <Icon name="capture" size={18} />
                <Chevrons>››</Chevrons>
                <Clipped><span>RenderView1</span></Clipped>
              </ViewName>
              <ViewButtons />
            </ViewHeader>
            <RenderArea>
              <AxesSlot>
                <Glyph $s={50} viewBox="0 0 50 50">
                  <path d="M10 8V38" stroke="#c8c840" />
                  <path d="M7 12L10 4 13 12Z" fill="#d8c800" />
                  <path d="M10 38H38" stroke="#e01010" strokeWidth="1.500" />
                  <path d="M35 35L44 38 35 41Z" fill="#e01010" />
                  <circle cx="10" cy="38" r="3" fill="#0a6a10" />
                  <g fill="#fff" fontSize="8" fontFamily="Liberation Sans">
                    <text x="13" y="11">Y</text>
                    <text x="13" y="36">Z</text>
                    <text x="38" y="36">X</text>
                  </g>
                </Glyph>
              </AxesSlot>
            </RenderArea>
          </RenderSide>
          <SheetSide>
            <ViewHeader $h={27} $end>
              <ActiveViewName>SpreadSheetView1</ActiveViewName>
              <ViewButtons />
            </ViewHeader>
            <BlueFrame>
              <SheetBar>
                <BarLabel $w={42}>Showing</BarLabel>
                <BarCombo $w={40}>
                  <ComboText>New</ComboText>
                  <ComboArrow />
                </BarCombo>
                <BarLabel $w={41}>Attribute</BarLabel>
                <BarCombo $w={41}>
                  <ComboText>Row</ComboText>
                  <ComboArrow />
                </BarCombo>
                <BarLabel $w={41}>Precision</BarLabel>
                <SheetSpin $on>
                  <SpinValue $center>6</SpinValue>
                  <SpinArrows $on />
                </SheetSpin>
                <BarButtons>
                  {["decimals", "selCells", "grid", "braces", "export"].map(n => (
                    <SquareButton key={n} $w={24} $h={23}>
                      <Icon name={n} size={22} />
                    </SquareButton>
                  ))}
                </BarButtons>
              </SheetBar>
              <SheetBody>
                <TableArea>
                  <Table>
                    <thead>
                      <tr>
                        <HeadCell $w={25} />
                        <HeadCell $w={46}>Row ID</HeadCell>
                        <HeadCell $w={45}>u</HeadCell>
                        <HeadCell $w={35}>y</HeadCell>
                        <HeadCell $w={36}>x</HeadCell>
                      </tr>
                    </thead>
                    <tbody>
                      {rows.map(([u, y, x], i) => (
                        <tr key={i}>
                          <RowHead>{i}</RowHead>
                          <Cell $odd={i % 2 === 1}>{i}</Cell>
                          <Cell $odd={i % 2 === 1}>{u}</Cell>
                          <Cell $odd={i % 2 === 1}>{y}</Cell>
                          <Cell $odd={i % 2 === 1}>{x}</Cell>
                        </tr>
                      ))}
                    </tbody>
                  </Table>
                </TableArea>
                <ScrollBar>
                  <ScrollStep />
                  <ScrollThumb />
                  <ScrollTrack />
                  <ScrollStep $down />
                </ScrollBar>
              </SheetBody>
            </BlueFrame>
          </SheetSide>
        </Pane>
      </RightColumn>
    </Main>
  </Page>
);

export default App;
